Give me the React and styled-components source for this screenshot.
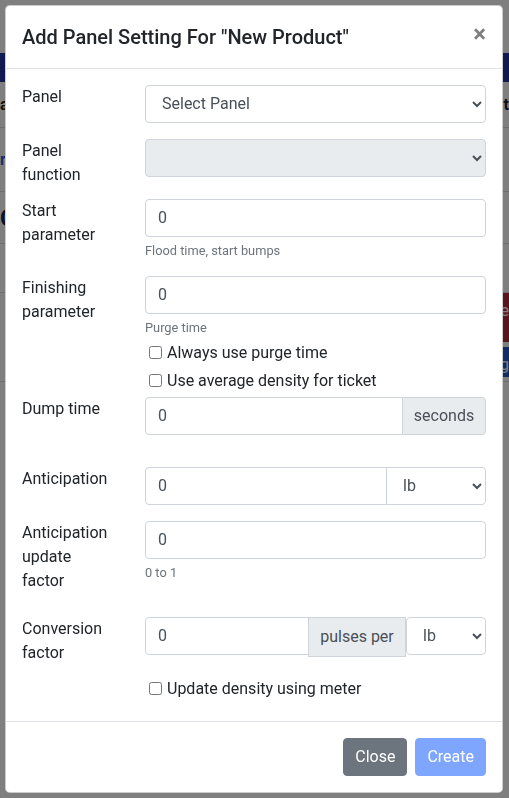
import React from 'react';
import styled, { createGlobalStyle } from 'styled-components';

const GlobalStyle = createGlobalStyle`
  * { box-sizing: border-box; }
  body {
    margin: 0;
    font-family: Roboto, "Liberation Sans", sans-serif;
    color: #212529;
    background: #fff;
    overflow: hidden;
  }
`;

// ---- page behind the modal ----
const Page = styled.div`
  height: 798px;
  background: #fff;
`;

const TopGap = styled.div`
  height: 53px;
`;

const NavBar = styled.div`
  height: 29px;
  background: #20349c;
`;

const PageRow = styled.div`
  height: ${(p) => p.$h}px;
  border-bottom: 1px solid #dcdcdc;
  display: flex;
  justify-content: space-between;
  align-items: ${(p) => p.$align || 'center'};
  font-weight: 700;
  color: ${(p) => p.$color || '#222'};
  font-size: ${(p) => p.$size || 16}px;
`;

const RightButtons = styled.div`
  display: flex;
  flex-direction: column;
  gap: 5px;
  align-self: flex-start;
`;

const PageButton = styled.div`
  width: 40px;
  height: ${(p) => p.$h}px;
  background: ${(p) => p.$bg};
  color: #fff;
  font-weight: 400;
  font-size: 16px;
  padding: 8px 0;
  text-align: right;
  white-space: nowrap;
`;

// ---- modal ----
const Backdrop = styled.div`
  position: fixed;
  inset: 0;
  background: rgba(0, 0, 0, 0.5);
  padding: 4.5px 6px 0 5px;
`;

const ModalContent = styled.div`
  background: #fff;
  border: 1px solid rgba(0, 0, 0, 0.2);
  border-radius: 4.8px;
  width: 498px;
`;

const Header = styled.div`
  display: flex;
  align-items: flex-start;
  justify-content: space-between;
  padding: 16px;
  border-bottom: 1px solid #dee2e6;
`;

const Title = styled.h5`
  margin: 0;
  font-size: 20px;
  font-weight: 500;
  line-height: 1.5;
  color: #212529;
`;

const CloseX = styled.button`
  border: 0;
  background: transparent;
  padding: 16px;
  margin: -16px -16px -16px auto;
  font-size: 24px;
  font-weight: 700;
  line-height: 1;
  color: #000;
  opacity: 0.5;
  font-family: inherit;
  cursor: pointer;
`;

const Body = styled.div`
  padding: 16px 16px 20px;
`;

const FieldRow = styled.div`
  display: grid;
  grid-template-columns: 123px 1fr;
  align-items: start;
  margin-bottom: ${(p) => p.$mb}px;
`;

const Label = styled.label`
  font-size: 16px;
  line-height: 24px;
  color: #212529;
`;

const Field = styled.div`
  display: flex;
  flex-direction: column;
  min-width: 0;
`;

const controlBase = `
  height: 38px;
  padding: 6px 12px;
  font-size: 16px;
  line-height: 1.5;
  font-family: inherit;
  color: #495057;
  background: #fff;
  border: 1px solid #ced4da;
  border-radius: 4px;
  outline: none;
`;

const TextInput = styled.input`
  ${controlBase}
  width: 100%;
  min-width: 0;
  flex: ${(p) => (p.$group ? '1 1 0%' : 'none')};
  ${(p) => p.$group && `
    border-top-right-radius: 0;
    border-bottom-right-radius: 0;
  `}
`;

const Select = styled.select`
  ${controlBase}
  width: ${(p) => (p.$w ? `${p.$w}px` : '100%')};
  flex: none;
  padding-left: 12px;
  background: ${(p) => (p.disabled ? '#e9ecef' : '#fff')};
  opacity: 1;
  ${(p) => p.$join && `
    border-top-left-radius: 0;
    border-bottom-left-radius: 0;
    margin-left: -1px;
  `}
`;

const InputGroup = styled.div`
  display: flex;
  align-items: flex-start;
`;

const Addon = styled.span`
  flex: none;
  width: ${(p) => p.$w}px;
  height: ${(p) => p.$h || 38}px;
  display: flex;
  align-items: center;
  justify-content: center;
  margin-left: -1px;
  font-size: 16px;
  color: #495057;
  background: #e9ecef;
  border: 1px solid #ced4da;
  border-radius: ${(p) => (p.$end ? '0 4px 4px 0' : '0')};
`;

const Help = styled.small`
  display: block;
  margin-top: 4px;
  font-size: 12.8px;
  line-height: 19.2px;
  color: #6c757d;
`;

const CheckLine = styled.label`
  display: flex;
  align-items: center;
  margin-top: 4px;
  font-size: 16px;
  line-height: 24px;
  color: #212529;
`;

const CheckOnly = styled(CheckLine)`
  margin-left: 123px;
`;

const Box = styled.input`
  width: 13px;
  height: 13px;
  margin: 3px 5px 3px 4px;
`;

const Footer = styled.div`
  display: flex;
  justify-content: flex-end;
  padding: 12px;
  border-top: 1px solid #dee2e6;
`;

const Button = styled.button`
  margin: 4px;
  height: 38px;
  padding: 6px 11px;
  font-size: 16px;
  line-height: 1.5;
  font-family: inherit;
  color: #fff;
  border: 1px solid ${(p) => p.$bg};
  background: ${(p) => p.$bg};
  border-radius: 4px;
`;

function App() {
  return (
    <>
      <GlobalStyle />
      <Page>
        <TopGap />
        <NavBar />
        <PageRow $h={46}>
          <span>al</span>
          <span>t</span>
        </PageRow>
        <PageRow $h={64} $color="#2a62c9">
          <span>ri</span>
          <span />
        </PageRow>
        <PageRow $h={52} $size={24} $color="#1c2650">
          <span>C</span>
          <span />
        </PageRow>
        <PageRow $h={49} />
        <PageRow $h={89}>
          <span />
          <RightButtons>
            <PageButton $h={49} $bg="#b02a37">le</PageButton>
            <PageButton $h={30} $bg="#2456c4">ng</PageButton>
          </RightButtons>
        </PageRow>
      </Page>

      <Backdrop>
        <ModalContent>
          <Header>
            <Title>Add Panel Setting For "New Product"</Title>
            <CloseX aria-label="Close">×</CloseX>
          </Header>

          <Body>
            <FieldRow $mb={16}>
              <Label>Panel</Label>
              <Select defaultValue="">
                <option value="">Select Panel</option>
              </Select>
            </FieldRow>

            <FieldRow $mb={12}>
              <Label>Panel<br />function</Label>
              <Select disabled defaultValue="">
                <option value="" />
              </Select>
            </FieldRow>

            <FieldRow $mb={16}>
              <Label>Start<br />parameter</Label>
              <Field>
                <TextInput defaultValue="0" />
                <Help>Flood time, start bumps</Help>
              </Field>
            </FieldRow>

            <FieldRow $mb={4}>
              <Label>Finishing<br />parameter</Label>
              <Field>
                <TextInput defaultValue="0" />
                <Help>Purge time</Help>
                <CheckLine><Box type="checkbox" />Always use purge time</CheckLine>
                <CheckLine><Box type="checkbox" />Use average density for ticket</CheckLine>
              </Field>
            </FieldRow>

            <FieldRow $mb={32}>
              <Label>Dump time</Label>
              <InputGroup>
                <TextInput $group defaultValue="0" />
                <Addon $w={84} $end>seconds</Addon>
              </InputGroup>
            </FieldRow>

            <FieldRow $mb={16}>
              <Label>Anticipation</Label>
              <InputGroup>
                <TextInput $group defaultValue="0" />
                <Select $w={100} $join defaultValue="lb">
                  <option value="lb">lb</option>
                  <option value="kg">kg</option>
                </Select>
              </InputGroup>
            </FieldRow>

            <FieldRow $mb={24}>
              <Label>Anticipation<br />update<br />factor</Label>
              <Field>
                <TextInput defaultValue="0" />
                <Help>0 to 1</Help>
              </Field>
            </FieldRow>

            <FieldRow $mb={12}>
              <Label>Conversion<br />factor</Label>
              <InputGroup>
                <TextInput $group defaultValue="0" />
                <Addon $w={98} $h={40}>pulses per</Addon>
                <Select $w={80} defaultValue="lb">
                  <option value="lb">lb</option>
                  <option value="kg">kg</option>
                </Select>
              </InputGroup>
            </FieldRow>

            <CheckOnly><Box type="checkbox" />Update density using meter</CheckOnly>
          </Body>

          <Footer>
            <Button $bg="#6c757d">Close</Button>
            <Button $bg="#7ea6ff">Create</Button>
          </Footer>
        </ModalContent>
      </Backdrop>
    </>
  );
}

export default App;
